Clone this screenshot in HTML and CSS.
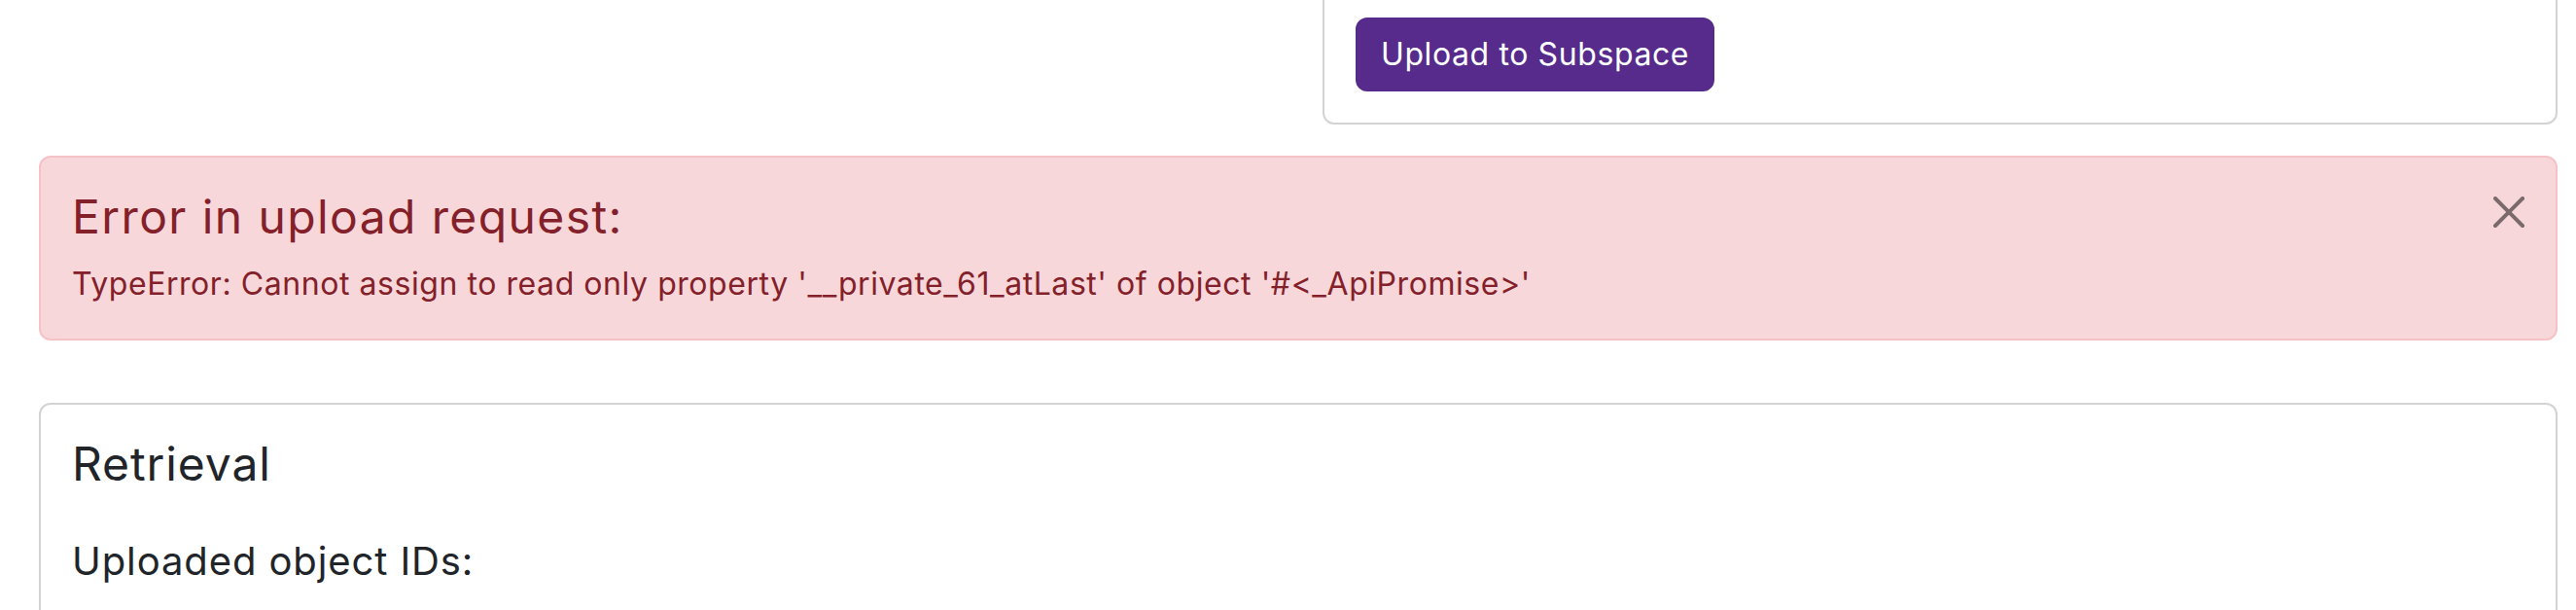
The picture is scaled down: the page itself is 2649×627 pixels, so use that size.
FILE: index.html
```html
<!DOCTYPE html>
<html lang="en">
<head>
<meta charset="utf-8">
<title>Subspace upload</title>
<link rel="stylesheet" href="styles.css">
</head>
<body>
<div class="page">
  <div class="top-row">
    <div class="col-left"></div>
    <div class="card upload-card">
      <button class="btn-primary" type="button">Upload to Subspace</button>
    </div>
  </div>

  <div class="alert alert-danger" role="alert">
    <h4 class="alert-heading">Error in upload request:</h4>
    <p class="alert-text">TypeError: Cannot assign to read only property '__private_61_atLast' of object '#&lt;_ApiPromise&gt;'</p>
    <button class="btn-close" type="button" aria-label="Close">
      <svg viewBox="0 0 16 16" width="32" height="32" aria-hidden="true"><path d="M.293.293a1 1 0 0 1 1.414 0L8 6.586 14.293.293a1 1 0 1 1 1.414 1.414L9.414 8l6.293 6.293a1 1 0 0 1-1.414 1.414L8 9.414l-6.293 6.293a1 1 0 0 1-1.414-1.414L6.586 8 .293 1.707a1 1 0 0 1 0-1.414z"/></svg>
    </button>
  </div>

  <div class="card retrieval-card">
    <h4 class="card-title">Retrieval</h4>
    <h5 class="ids-title">Uploaded object IDs:</h5>
  </div>
</div>
</body>
</html>
```
FILE: styles.css
```css
* { box-sizing: border-box; }

html, body {
  margin: 0;
  background: #fff;
}

body {
  font-family: "Inter", "Noto Sans", sans-serif;
  font-size: 32px;
  line-height: 1.5;
  color: #212529;
  height: 627px;
  overflow: hidden;
}

.page {
  padding: 0 19px 0 40px;
}

.top-row {
  display: grid;
  grid-template-columns: 1fr 1fr;
  column-gap: 50px;
}

.card {
  border: 2px solid #d3d3d3;
  border-radius: 12px;
  background: #fff;
  padding: 32px;
}

.upload-card {
  margin-top: -16px;
}

.btn-primary {
  display: inline-block;
  font-family: inherit;
  font-size: 32px;
  line-height: 48px;
  letter-spacing: 0.6px;
  padding: 12px 24px;
  color: #fff;
  background: #562b8c;
  border: 2px solid #562b8c;
  border-radius: 12px;
  cursor: pointer;
}

.alert {
  position: relative;
  margin-top: 32px;
  padding: 32px 96px 32px 32px;
  border: 2px solid #f5c2c7;
  border-radius: 12px;
  background: #f8d7da;
  color: #842029;
}

.alert-heading {
  margin: 0 0 16px;
  font-size: 48px;
  line-height: 57.6px;
  font-weight: 400;
  letter-spacing: 1.4px;
  color: inherit;
}

.alert-text {
  margin: 0;
  font-size: 32px;
  line-height: 48px;
  letter-spacing: 0.56px;
}

.btn-close {
  position: absolute;
  top: 0;
  right: 0;
  padding: 40px 32px;
  width: 96px;
  height: 112px;
  border: 0;
  background: transparent;
  opacity: 0.5;
  cursor: pointer;
  display: flex;
}

.btn-close svg {
  display: block;
  width: 32px;
  height: 32px;
  fill: #000;
}

.retrieval-card {
  margin-top: 64px;
  height: 240px;
}

.card-title {
  margin: 0 0 16px;
  font-size: 48px;
  line-height: 57.6px;
  font-weight: 400;
  letter-spacing: 0.9px;
}

.ids-title {
  margin: 48px 0 0;
  font-size: 40px;
  line-height: 48px;
  font-weight: 400;
  letter-spacing: 0.9px;
}
```
